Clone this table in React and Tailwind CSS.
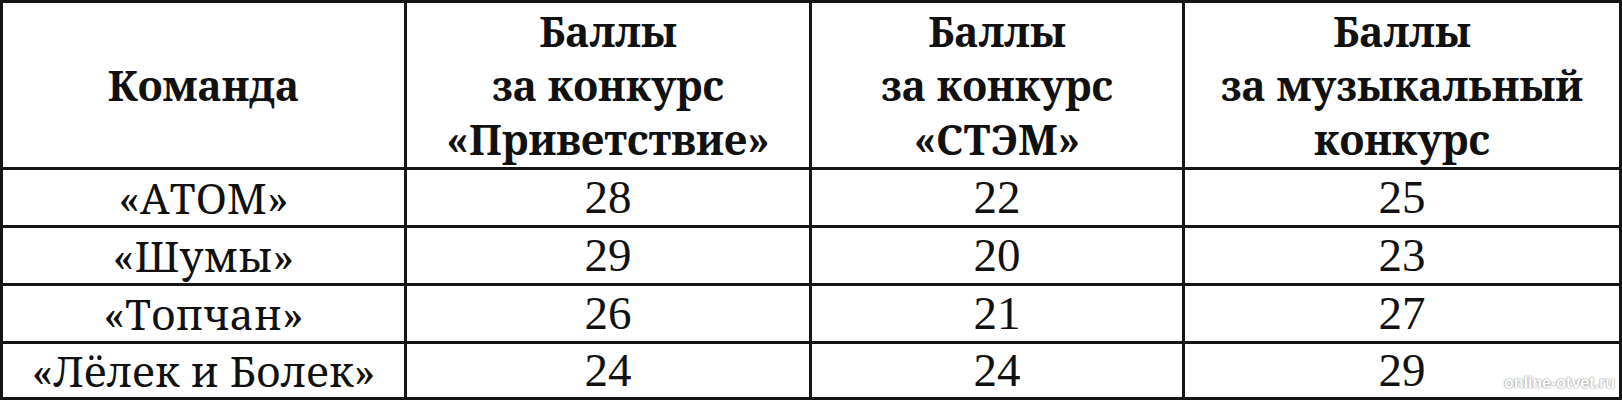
import React from 'react';

// Results table: points per team for each contest
const HEADERS = [
  ['Команда'],
  ['Баллы', 'за конкурс', '«Приветствие»'],
  ['Баллы', 'за конкурс', '«СТЭМ»'],
  ['Баллы', 'за музыкальный', 'конкурс'],
];

const ROWS = [
  ['«АТОМ»', 28, 22, 25],
  ['«Шумы»', 29, 20, 23],
  ['«Топчан»', 26, 21, 27],
  ['«Лёлек и Болек»', 24, 24, 29],
];

// Cyrillic text needs Noto Serif (Liberation Serif has no Cyrillic here); digits keep Times metrics
const App = () => {
  return (
    <div className="relative w-[1622px] h-[400px] bg-white text-[#111]">
      <div className="grid grid-cols-[401px_402px_370px_434px] grid-rows-[164px_55px_55px_55px_53px] gap-[3px] p-[3px] bg-[#151515] w-full h-full">
        {HEADERS.map((lines, i) => (
          <div
            key={i}
            className="bg-white flex flex-col items-center justify-center font-bold font-['Noto_Serif','DejaVu_Serif',serif] text-[41px] leading-[54px] text-center"
          >
            {lines.map((line) => (
              <span key={line}>{line}</span>
            ))}
          </div>
        ))}

        {ROWS.map((row) =>
          row.map((cell, j) =>
            j === 0 ? (
              <div
                key={`${row[0]}-${j}`}
                className="bg-white flex items-center justify-center font-['Noto_Serif','DejaVu_Serif',serif] text-[42px] leading-[55px]"
              >
                {cell}
              </div>
            ) : (
              <div
                key={`${row[0]}-${j}`}
                className="bg-white flex items-center justify-center font-['Liberation_Serif','Times_New_Roman',serif] text-[47px] leading-[55px]"
              >
                {cell}
              </div>
            )
          )
        )}
      </div>

      {/* Watermark */}
      <span className="absolute right-[7px] bottom-[5px] font-['Liberation_Sans',Arial,sans-serif] text-[16px] font-bold text-white [text-shadow:0_0_2px_#8a8a8a,0_0_1px_#9a9a9a]">
        online-otvet.ru
      </span>
    </div>
  );
};

export default App;
